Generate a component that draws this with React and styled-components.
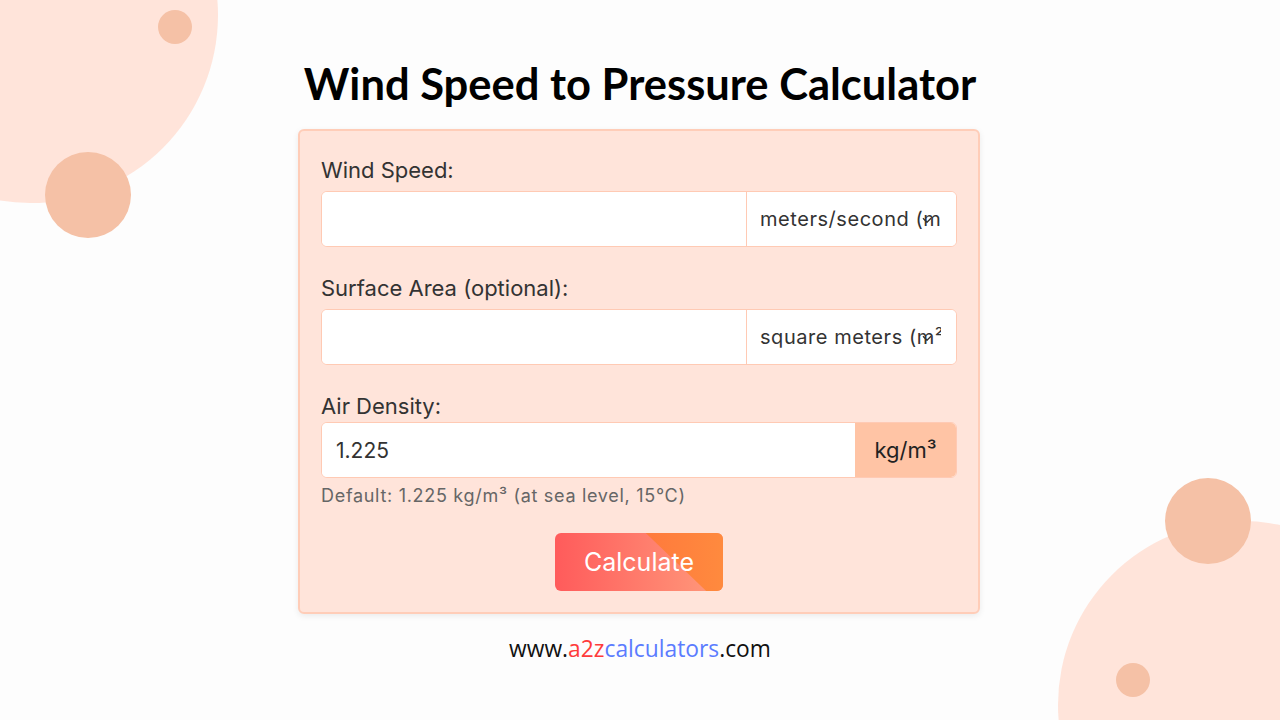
import React, { useState } from 'react';
import styled, { createGlobalStyle } from 'styled-components';

const GlobalStyle = createGlobalStyle`
  * { box-sizing: border-box; }
  html, body {
    margin: 0;
    padding: 0;
    background: #fdfdfd;
    font-family: Inter, "Noto Sans", sans-serif;
    color: #333;
  }
`;

const Page = styled.div`
  position: relative;
  width: 1280px;
  height: 720px;
  overflow: hidden;
  display: flex;
  flex-direction: column;
  align-items: center;
  padding-top: 58px;
`;

const Bubble = styled.div`
  position: absolute;
  border-radius: 50%;
  width: ${p => p.r * 2}px;
  height: ${p => p.r * 2}px;
  left: ${p => p.x - p.r}px;
  top: ${p => p.y - p.r}px;
  background: ${p => (p.dark ? '#f5c1a6' : '#ffe4da')};
  z-index: 0;
`;

const Title = styled.h1`
  position: relative;
  z-index: 1;
  margin: 0 0 21px;
  font-family: Lato, Inter, sans-serif;
  font-weight: 700;
  font-size: 43.5px;
  line-height: 50px;
  color: #000;
`;

const Card = styled.form`
  position: relative;
  z-index: 1;
  width: 682px;
  margin-left: -2px;
  background: #ffe4da;
  border: 2px solid #ffcdb8;
  border-radius: 6px;
  box-shadow: 0 2px 6px rgba(0, 0, 0, 0.08);
  padding: 26px 21px 21px;
  display: flex;
  flex-direction: column;
`;

const Field = styled.div`
  display: flex;
  flex-direction: column;
  margin-bottom: ${p => (p.tight ? 0 : 28)}px;
`;

const Label = styled.label`
  font-size: 22px;
  line-height: 26px;
  color: #333;
  margin-bottom: ${p => p.mb ?? 8}px;
`;

const Group = styled.div`
  display: flex;
  height: 56px;
  border: 1.5px solid #ffcab4;
  border-radius: 6px;
  overflow: hidden;
  background: #fff;
`;

const TextInput = styled.input`
  flex: 1;
  min-width: 0;
  border: none;
  outline: none;
  background: #fff;
  padding: 0 14px;
  font-family: Inter, sans-serif;
  font-size: 21px;
  color: #333;
`;

const SelectWrap = styled.div`
  position: relative;
  width: 210px;
  border-left: 1.5px solid #ffcab4;
`;

const Select = styled.select`
  appearance: none;
  -webkit-appearance: none;
  width: 100%;
  height: 100%;
  border: none;
  outline: none;
  background: #fff;
  padding: 0 15px 0 13px;
  font-family: Inter, sans-serif;
  font-size: 20px;
  letter-spacing: 0.55px;
  color: #333;
`;

const Chevron = styled.svg`
  position: absolute;
  right: 24px;
  top: 50%;
  transform: translateY(-30%);
  pointer-events: none;
`;

const Addon = styled.span`
  width: 101px;
  display: flex;
  align-items: center;
  justify-content: center;
  background: #ffc4a5;
  font-size: 22px;
  color: #222;
`;

const Help = styled.div`
  margin-top: 7px;
  font-size: 18px;
  letter-spacing: 0.7px;
  line-height: 22px;
  color: #666;
`;

const ButtonRow = styled.div`
  display: flex;
  justify-content: center;
  margin-top: 26px;
`;

const Button = styled.button`
  position: relative;
  overflow: hidden;
  width: 168px;
  height: 58px;
  border: none;
  border-radius: 6px;
  background: linear-gradient(90deg, #ff5b5b 0%, #ff9b7c 100%);
  color: #fff;
  font-family: Inter, sans-serif;
  font-size: 25px;
  cursor: pointer;

  &::after {
    content: '';
    position: absolute;
    inset: 0;
    background: linear-gradient(90deg, #ff673a 0%, #ff8a3e 100%);
    clip-path: polygon(54% 0, 100% 0, 100% 100%, 90% 100%);
  }

  span {
    position: relative;
    z-index: 1;
  }
`;

const Footer = styled.div`
  position: relative;
  z-index: 1;
  margin-top: 20px;
  font-family: "Open Sans", sans-serif;
  font-size: 22.8px;
  line-height: 30px;
  color: #111;
`;

const Brand = styled.span`
  color: ${p => p.c};
`;

const UnitSelect = ({ options }) => (
  <SelectWrap>
    <Select defaultValue={options[0]}>
      {options.map(o => (
        <option key={o}>{o}</option>
      ))}
    </Select>
    <Chevron width="10" height="6" viewBox="0 0 10 6">
      <path d="M1 1l4 4 4-4" fill="none" stroke="#333" strokeWidth="1.4" />
    </Chevron>
  </SelectWrap>
);

const App = () => {
  const [speed, setSpeed] = useState('');
  const [area, setArea] = useState('');
  const [density, setDensity] = useState('1.225');

  return (
    <>
      <GlobalStyle />
      <Page>
        <Bubble x={30} y={15} r={188} />
        <Bubble dark x={175} y={27} r={17} />
        <Bubble dark x={88} y={195} r={43} />
        <Bubble x={1242} y={705} r={184} />
        <Bubble dark x={1208} y={521} r={43} />
        <Bubble dark x={1133} y={680} r={17} />

        <Title>Wind Speed to Pressure Calculator</Title>

        <Card onSubmit={e => e.preventDefault()}>
          <Field>
            <Label>Wind Speed:</Label>
            <Group>
              <TextInput value={speed} onChange={e => setSpeed(e.target.value)} />
              <UnitSelect options={['meters/second (m/s)', 'kilometers/hour (km/h)', 'miles/hour (mph)', 'knots']} />
            </Group>
          </Field>
          <Field>
            <Label>Surface Area (optional):</Label>
            <Group>
              <TextInput value={area} onChange={e => setArea(e.target.value)} />
              <UnitSelect options={['square meters (m²)', 'square feet (ft²)']} />
            </Group>
          </Field>
          <Field tight>
            <Label mb={3}>Air Density:</Label>
            <Group>
              <TextInput value={density} onChange={e => setDensity(e.target.value)} />
              <Addon>kg/m³</Addon>
            </Group>
            <Help>Default: 1.225 kg/m³ (at sea level, 15°C)</Help>
          </Field>
          <ButtonRow>
            <Button type="submit"><span>Calculate</span></Button>
          </ButtonRow>
        </Card>

        <Footer>
          www.<Brand c="#ff3b3b">a2z</Brand><Brand c="#5b7cff">calculators</Brand>.com
        </Footer>
      </Page>
    </>
  );
};

export default App;
